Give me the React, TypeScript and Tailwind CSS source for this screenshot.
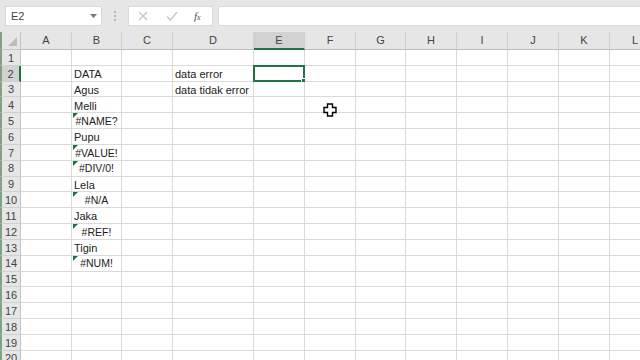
import React from 'react';

const COLS = [
  { name: 'A', w: 'w-[51px]' },
  { name: 'B', w: 'w-[50px]' },
  { name: 'C', w: 'w-[51px]' },
  { name: 'D', w: 'w-[81px]' },
  { name: 'E', w: 'w-[51px]' },
  { name: 'F', w: 'w-[51px]' },
  { name: 'G', w: 'w-[50px]' },
  { name: 'H', w: 'w-[51px]' },
  { name: 'I', w: 'w-[51px]' },
  { name: 'J', w: 'w-[51px]' },
  { name: 'K', w: 'w-[51px]' },
  { name: 'L', w: 'w-[51px]' },
];

type Cell = { text: string; error?: boolean };

// row number -> column letter -> cell
const DATA: Record<number, Record<string, Cell>> = {
  2: { B: { text: 'DATA' }, D: { text: 'data error' } },
  3: { B: { text: 'Agus' }, D: { text: 'data tidak error' } },
  4: { B: { text: 'Melli' } },
  5: { B: { text: '#NAME?', error: true } },
  6: { B: { text: 'Pupu' } },
  7: { B: { text: '#VALUE!', error: true } },
  8: { B: { text: '#DIV/0!', error: true } },
  9: { B: { text: 'Lela' } },
  10: { B: { text: '#N/A', error: true } },
  11: { B: { text: 'Jaka' } },
  12: { B: { text: '#REF!', error: true } },
  13: { B: { text: 'Tigin' } },
  14: { B: { text: '#NUM!', error: true } },
};

const ROWS = Array.from({ length: 20 }, (_, i) => i + 1);

const FormulaBar: React.FC = () => (
  <div className="h-[32px] bg-[#e6e6e6] flex items-center shrink-0">
    <div className="ml-[5px] w-[97px] h-[20px] bg-white border border-[#dadada] flex items-center justify-between pl-[5px] pr-[4px]">
      <span className="text-[11px] text-[#444]">E2</span>
      <svg width="7" height="4" viewBox="0 0 7 4">
        <path d="M0 0 L7 0 L3.5 4 Z" fill="#777" />
      </svg>
    </div>
    <div className="w-[26px] flex flex-col items-center gap-[2px]">
      <span className="w-[2px] h-[2px] bg-[#b5b5b5]" />
      <span className="w-[2px] h-[2px] bg-[#b5b5b5]" />
      <span className="w-[2px] h-[2px] bg-[#b5b5b5]" />
    </div>
    <div className="w-[85px] h-[20px] bg-white border border-[#dadada] flex items-center">
      <svg width="10" height="10" viewBox="0 0 10 10" className="ml-[9px]">
        <path d="M1 1 L9 9 M9 1 L1 9" stroke="#c4c4c4" strokeWidth="1.3" />
      </svg>
      <svg width="12" height="10" viewBox="0 0 12 10" className="ml-[18px]">
        <path d="M1 5.5 L4.5 9 L11 1" stroke="#c4c4c4" strokeWidth="1.3" fill="none" />
      </svg>
      <span className="ml-[16px] text-[11px] italic text-[#555] font-['Liberation_Serif',serif] leading-none">
        f<span className="text-[8px]">x</span>
      </span>
    </div>
    <div className="ml-[5px] flex-1 h-[20px] bg-white border-y border-l border-[#dadada]" />
  </div>
);

const App: React.FC = () => {
  return (
    <div className="w-[640px] h-[360px] overflow-hidden bg-white relative font-['Liberation_Sans',Arial,sans-serif] flex flex-col">
      <FormulaBar />
      {/* column headers */}
      <div className="flex h-[18px] shrink-0 bg-[#e6e6e6]">
        <div className="w-[21px] shrink-0 border-l-2 border-l-[#82a282] border-r border-b border-[#c4c4c4] relative">
          <svg width="9" height="9" viewBox="0 0 9 9" className="absolute right-[3px] bottom-[3px]">
            <path d="M9 0 L9 9 L0 9 Z" fill="#bdbdbd" />
          </svg>
        </div>
        {COLS.map((c) => (
          <div
            key={c.name}
            className={`${c.w} shrink-0 flex items-center justify-center text-[11px] text-[#444] border-r border-[#cfcfcf] ${
              c.name === 'E' ? 'bg-[#d2d2d2] border-b-2 border-b-[#217346]' : 'border-b border-b-[#bdbdbd]'
            }`}
          >
            {c.name}
          </div>
        ))}
        <div className="flex-1 border-b border-[#bdbdbd]" />
      </div>
      {/* rows */}
      {ROWS.map((r) => (
        <div key={r} className="flex h-[15.83px] shrink-0">
          <div
            className={`w-[21px] shrink-0 flex items-center justify-center pt-[1px] text-[11px] text-[#444] border-l-2 border-l-[#82a282] border-b border-b-[#d0d0d0] ${
              r === 2 ? 'bg-[#d2d2d2] border-r-2 border-r-[#217346]' : 'bg-[#e6e6e6] border-r border-r-[#c4c4c4]'
            }`}
          >
            {r}
          </div>
          {COLS.map((c) => {
            const cell = DATA[r]?.[c.name];
            return (
              <div
                key={c.name}
                className={`${c.w} shrink-0 relative border-r border-b border-[#dadada] flex items-center pt-[2px] text-[#222] whitespace-nowrap ${
                  cell?.error ? 'justify-center text-[10.5px]' : 'pl-[2px] text-[11px]'
                }`}
              >
                {cell?.error && (
                  <svg width="5" height="5" viewBox="0 0 5 5" className="absolute left-[1px] top-0">
                    <path d="M0 0 L5 0 L0 5 Z" fill="#1e7145" />
                  </svg>
                )}
                {cell?.text}
                {r === 2 && c.name === 'E' && (
                  <div className="absolute -left-[1px] -top-[1px] -right-[1px] -bottom-[1px] border-2 border-[#217346]">
                    <div className="absolute -right-[3px] -bottom-[3px] w-[5px] h-[5px] bg-[#217346] border border-white" />
                  </div>
                )}
              </div>
            );
          })}
          <div className="flex-1 border-b border-[#dadada]" />
        </div>
      ))}
      {/* cell cursor */}
      <svg width="14" height="14" viewBox="0 0 14 14" className="absolute left-[323px] top-[103px]">
        <path
          d="M4.5 1 H9.5 V4.5 H13 V9.5 H9.5 V13 H4.5 V9.5 H1 V4.5 H4.5 Z"
          fill="white"
          stroke="black"
          strokeWidth="1.4"
        />
      </svg>
    </div>
  );
};

export default App;
